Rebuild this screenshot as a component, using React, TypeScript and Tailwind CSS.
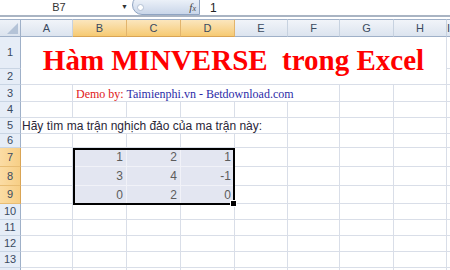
import React from "react";

const SANS = "font-['Liberation_Sans',Arial,sans-serif]";

function Blank() {
  return <div className="border-r border-b border-[#d9dee8] bg-white" />;
}

function ColHead({ label, sel }: { label: string; sel?: boolean }) {
  return (
    <div
      className={
        sel
          ? "flex items-center justify-center border-t border-r border-b border-t-[#9fb0c8] border-r-[#e2b46c] border-b-[#d9a455] bg-gradient-to-b from-[#fbe6bd] to-[#f6ca72] text-[11px] text-[#3a4a60]"
          : "flex items-center justify-center border-t border-r border-b border-t-[#9fb0c8] border-r-[#c7d2e0] border-b-[#9fb0c8] bg-gradient-to-b from-[#f1f4f9] to-[#dce4ef] text-[11px] text-[#3a4a60]"
      }
    >
      {label}
    </div>
  );
}

function RowHead({ n, sel }: { n?: number; sel?: boolean }) {
  return (
    <div
      className={
        sel
          ? "flex items-center justify-center border-r border-b border-r-[#d9a455] border-b-[#e8bd74] bg-gradient-to-r from-[#fbdca4] to-[#f7cf86] text-[11px] text-[#3a4a60]"
          : "flex items-center justify-center border-r border-b border-r-[#9fb0c8] border-b-[#c9d5e4] bg-[#e6edf7] text-[11px] text-[#3a4a60]"
      }
    >
      {n}
    </div>
  );
}

function NumCell({ v }: { v: string }) {
  return (
    <div className="flex items-center justify-end border-r border-b border-[#f1f2f8] bg-[#e3e6f1] pr-[3px] text-[12px] text-[#5c5c5c]">
      {v}
    </div>
  );
}

function Blanks({ count }: { count: number }) {
  return (
    <>
      {Array.from({ length: count }).map((_, i) => (
        <Blank key={i} />
      ))}
    </>
  );
}

export default function App() {
  const cols = ["A", "B", "C", "D", "E", "F", "G", "H", "I"];
  return (
    <div className={`h-[270px] w-[450px] overflow-hidden bg-white ${SANS}`}>
      {/* formula bar */}
      <div className="flex h-[15px] items-center overflow-visible">
        <div className="flex w-[118px] justify-center text-[11px] text-[#333]">B7</div>
        <div className="ml-[3px] text-[7px] text-[#333]">▼</div>
        <div className="relative ml-[4px] -mt-[5px] flex h-[20px] w-[68px] items-center justify-between rounded-l-full border border-[#8fa4c2] bg-gradient-to-b from-[#f5f8fc] to-[#c9d6e9] pl-[4px] pr-[3px]">
          <div className="mt-[4px] h-[7px] w-[7px] rounded-full border border-[#b3c1d4] bg-white" />
          <span className="mt-[4px] font-['Liberation_Serif',serif] text-[11px] italic text-[#444]">
            f<span className="text-[8px]">x</span>
          </span>
        </div>
        <div className="ml-[10px] text-[12px] text-[#222]">1</div>
      </div>
      <div className="h-[2px] bg-[#a9b4c3]" />
      <div className="h-[2px] bg-white" />

      {/* sheet grid */}
      <div className="grid grid-cols-[21px_52px_54px_54px_54px_53px_52px_54px_53px_1fr] grid-rows-[18px_32px_16px_17px_16px_16px_14px_19px_19px_18px_16px_16px_16px_16px_16px]">
        {/* corner */}
        <div className="relative border-t border-r border-b border-t-[#9fb0c8] border-r-[#9fb0c8] border-b-[#9fb0c8] bg-gradient-to-b from-[#eef2f8] to-[#dbe3ee]">
          <svg className="absolute bottom-[2px] right-[2px]" width="11" height="11" viewBox="0 0 11 11">
            <polygon points="11,0 11,11 0,11" fill="#b4c3d7" />
          </svg>
        </div>
        {cols.map((c) => (
          <ColHead key={c} label={c} sel={c === "B" || c === "C" || c === "D"} />
        ))}

        {/* row 1-2 merged title */}
        <RowHead n={1} />
        <div className="col-span-8 row-span-2 flex items-center justify-center border-r border-b border-[#d9dee8] bg-white">
          <span className="whitespace-pre font-['Liberation_Serif',serif] text-[29px] font-bold leading-none text-[#ff0000]">
            {"Hàm MINVERSE  trong Excel"}
          </span>
        </div>
        <Blank />
        <RowHead n={2} />
        <Blank />

        {/* row 3 */}
        <RowHead n={3} />
        <Blank />
        <div className="col-span-5 flex items-end border-r border-b border-[#d9dee8] pb-[1px] pl-[3px]">
          <span className="whitespace-nowrap font-['Liberation_Serif',serif] text-[12px] leading-none">
            <span className="text-[#e01818]">Demo by: </span>
            <span className="text-[#2c2ca8]">Taimienphi.vn - Betdownload.com</span>
          </span>
        </div>
        <Blanks count={3} />

        {/* row 4 */}
        <RowHead n={4} />
        <Blanks count={9} />

        {/* row 5 */}
        <RowHead n={5} />
        <div className="col-span-5 flex items-end border-r border-b border-[#d9dee8] pb-[1px] pl-[1px]">
          <span className="whitespace-nowrap text-[12px] leading-none text-[#2a2638]">
            Hãy tìm ma trận nghịch đảo của ma trận này:
          </span>
        </div>
        <Blanks count={4} />

        {/* row 6 */}
        <RowHead n={6} />
        <Blanks count={9} />

        {/* row 7-9 */}
        <RowHead n={7} sel />
        <Blank />
        <div className="relative col-span-3 row-span-3 grid grid-cols-3 grid-rows-[19px_19px_18px]">
          <NumCell v="1" />
          <NumCell v="2" />
          <NumCell v="1" />
          <NumCell v="3" />
          <NumCell v="4" />
          <NumCell v="-1" />
          <NumCell v="0" />
          <NumCell v="2" />
          <NumCell v="0" />
          <div className="pointer-events-none absolute left-0 top-0 right-0 bottom-[-1px] border-2 border-black" />
          <div className="absolute right-[-1px] bottom-[-2px] h-[5px] w-[5px] bg-black outline outline-1 outline-white" />
        </div>
        <Blanks count={5} />
        <RowHead n={8} sel />
        <Blank />
        <Blanks count={5} />
        <RowHead n={9} sel />
        <Blank />
        <Blanks count={5} />

        {/* rows 10-13 */}
        {[10, 11, 12, 13].map((n) => (
          <React.Fragment key={n}>
            <RowHead n={n} />
            <Blanks count={9} />
          </React.Fragment>
        ))}
        {/* row 14, only a sliver visible */}
        <RowHead />
        <Blanks count={9} />
      </div>
    </div>
  );
}
